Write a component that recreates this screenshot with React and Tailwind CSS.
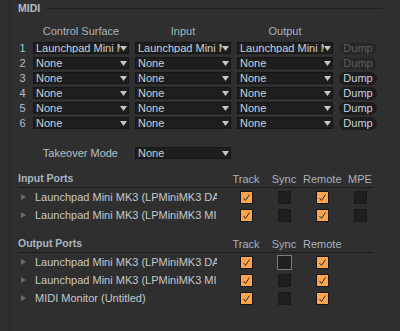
const FONT = "font-['Liberation_Sans',Arial,sans-serif]";

const surfaces = [
  { cs: 'Launchpad Mini MK3', input: 'Launchpad Mini MK3', output: 'Launchpad Mini MK3', dump: false },
  { cs: 'None', input: 'None', output: 'None', dump: false },
  { cs: 'None', input: 'None', output: 'None', dump: true },
  { cs: 'None', input: 'None', output: 'None', dump: true },
  { cs: 'None', input: 'None', output: 'None', dump: true },
  { cs: 'None', input: 'None', output: 'None', dump: true },
];

const inputPorts = [
  { name: 'Launchpad Mini MK3 (LPMiniMK3 DAW Out)', track: true, sync: false, remote: true, mpe: false },
  { name: 'Launchpad Mini MK3 (LPMiniMK3 MIDI Out)', track: true, sync: false, remote: true, mpe: false },
];

const outputPorts = [
  { name: 'Launchpad Mini MK3 (LPMiniMK3 DAW In)', track: true, sync: false, remote: true, focus: true },
  { name: 'Launchpad Mini MK3 (LPMiniMK3 MIDI In)', track: true, sync: false, remote: true },
  { name: 'MIDI Monitor (Untitled)', track: true, sync: false, remote: true },
];

function Select({ value }) {
  return (
    <div className="w-[96px] h-[12px] shrink-0 flex items-center bg-[#1e1e1e] border border-[#151515]">
      <span className="flex-1 min-w-0 overflow-hidden whitespace-nowrap pl-[2px] leading-[10px] text-[#c9d1d9]">
        {value}
      </span>
      <svg width="7" height="5" className="shrink-0 mr-[1px]">
        <path d="M0 0H7L3.5 5Z" fill="#c6c6c6" />
      </svg>
    </div>
  );
}

function Dump({ enabled }) {
  return (
    <div
      className={`w-[38px] h-[13px] shrink-0 rounded-full flex items-center justify-center leading-none ${
        enabled ? 'bg-[#1c1c1c] text-[#c9d3e2]' : 'bg-[#272727] border border-[#2c2c2c] text-[#5e5e5e]'
      }`}
    >
      Dump
    </div>
  );
}

function Check({ on, focus }) {
  if (on) {
    return (
      <div className="w-[13px] h-[13px] bg-[#ffa44e] border border-[#171717] flex items-center justify-center">
        <svg width="11" height="11" viewBox="0 0 11 11">
          <path d="M2.5 6L4.5 8.5L8.5 2.5" fill="none" stroke="#2a2a2a" strokeWidth="1" />
        </svg>
      </div>
    );
  }
  if (focus) {
    return <div className="w-[15px] h-[15px] bg-[#1f1f1f] border border-[#7c7c7c]" />;
  }
  return <div className="w-[13px] h-[13px] bg-[#1f1f1f] border border-[#191919]" />;
}

function PortRow({ port, cols }) {
  return (
    <div className="h-[18px] flex items-center">
      <div className="w-[17px] shrink-0 flex items-center">
        <svg width="5" height="6" className="ml-[3px]">
          <path d="M0 0L5 3L0 6Z" fill="#6b6b6b" />
        </svg>
      </div>
      <div className="w-[182px] shrink-0 overflow-hidden whitespace-nowrap text-[#c3c8cd]">{port.name}</div>
      <div className="w-[10px] shrink-0" />
      {cols.map(c => (
        <div key={c} className="w-[38px] shrink-0 flex justify-center">
          <Check on={port[c]} focus={c === 'sync' && port.focus} />
        </div>
      ))}
    </div>
  );
}

function PortSection({ title, labels, cols, ports, className }) {
  return (
    <div className={className}>
      <div className="w-[355px] h-[17px] flex items-center border-b border-[#1e1e1e]">
        <div className="w-[209px] shrink-0 font-bold text-[10.5px] text-[#a9b5c1]">{title}</div>
        {labels.map(l => (
          <div key={l} className="w-[38px] shrink-0 text-center text-[#a7b2bd]">{l}</div>
        ))}
      </div>
      {ports.map(p => (
        <PortRow key={p.name} port={p} cols={cols} />
      ))}
    </div>
  );
}

export default function App() {
  return (
    <div className={`w-[400px] h-[331px] bg-[#2f2f2f] overflow-hidden flex text-[11px] ${FONT}`}>
      <div className="w-[9px] shrink-0" />
      <div className="flex-1 border-l border-[#272727] pl-[8px] flex flex-col">

        {/* MIDI heading */}
        <div className="w-[365px] h-[17px] flex items-center gap-[6px]">
          <span className="font-bold text-[10.5px] text-[#b3bfcb]">MIDI</span>
          <div className="flex-1 h-px bg-[#202020]" />
        </div>

        {/* Column headers */}
        <div className="mt-[7px] h-[14px] flex items-center gap-[6px] text-[#a8b3be]">
          <div className="w-[9px] shrink-0" />
          <div className="w-[96px] shrink-0 text-center">Control Surface</div>
          <div className="w-[96px] shrink-0 text-center">Input</div>
          <div className="w-[96px] shrink-0 text-center">Output</div>
        </div>

        {/* Control surface rows */}
        <div className="mt-[4px] flex flex-col gap-[3px]">
          {surfaces.map((s, i) => (
            <div key={i} className="h-[12px] flex items-center gap-[6px]">
              <div className="w-[9px] shrink-0 text-center text-[#b5bfc9]">{i + 1}</div>
              <Select value={s.cs} />
              <Select value={s.input} />
              <Select value={s.output} />
              <Dump enabled={s.dump} />
            </div>
          ))}
        </div>

        {/* Takeover */}
        <div className="mt-[18px] h-[12px] flex items-center">
          <div className="w-[100px] shrink-0 text-right text-[#b8c0c8]">Takeover Mode</div>
          <div className="ml-[17px]">
            <Select value="None" />
          </div>
        </div>

        <PortSection
          className="mt-[12px]"
          title="Input Ports"
          labels={['Track', 'Sync', 'Remote', 'MPE']}
          cols={['track', 'sync', 'remote', 'mpe']}
          ports={inputPorts}
        />

        <PortSection
          className="mt-[12px]"
          title="Output Ports"
          labels={['Track', 'Sync', 'Remote']}
          cols={['track', 'sync', 'remote']}
          ports={outputPorts}
        />
      </div>
    </div>
  );
}
